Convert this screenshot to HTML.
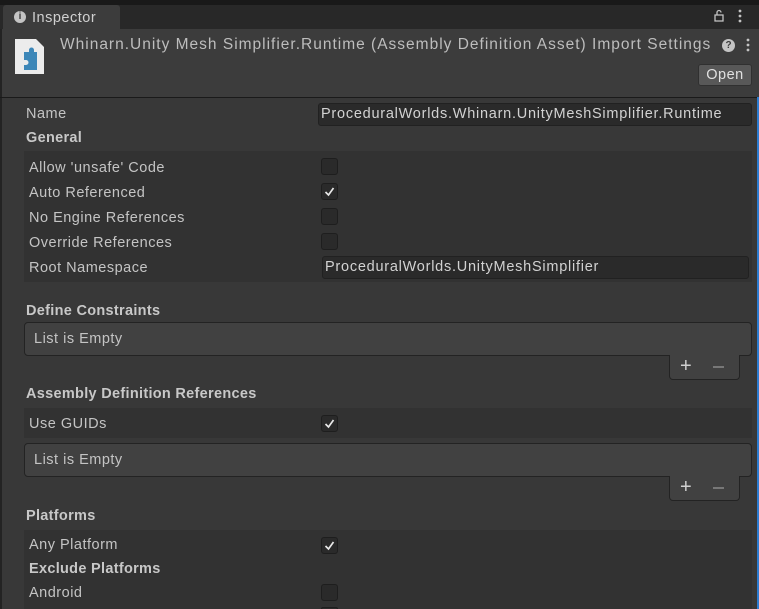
<!DOCTYPE html>
<html style="width:759px;height:609px;overflow:hidden"><head><style>
*{margin:0;padding:0;box-sizing:border-box}
body{width:759px;height:609px;overflow:hidden;background:#383838;font-family:"Liberation Sans",sans-serif;font-size:14.5px;letter-spacing:0.5px;color:#c4c4c4;position:relative}
.a{position:absolute}
.lbl{position:absolute;left:29px;line-height:20px;white-space:nowrap}
.b{font-weight:bold;color:#c8c8c8;letter-spacing:0.3px}
.cb{position:absolute;left:321px;width:17px;height:17px;background:#2a2a2a;border:1px solid #1e1e1e;border-radius:3px}
.cb svg{position:absolute;left:2px;top:2px}
.field{position:absolute;background:#2a2a2a;border:1px solid #212121;border-radius:3px;line-height:21px;padding-left:2px;color:#d2d2d2;white-space:nowrap;overflow:hidden;letter-spacing:0.75px}
.list{position:absolute;left:24px;width:728px;height:34px;background:#414141;border:1px solid #232323;border-radius:4px;padding-left:9px;line-height:32px}
.foot{position:absolute;left:669px;width:71px;height:25px;background:#414141;border:1px solid #232323;border-top:none;border-radius:0 0 4px 4px}
.grp{position:absolute;left:24px;width:728px;background:#323232}
</style></head><body>
<div class="a" style="left:0;top:0;width:759px;height:29px;background:#282828"></div>
<div class="a" style="left:0;top:0;width:759px;height:5px;background:#191919"></div>
<div class="a" style="left:3px;top:5px;width:117px;height:25px;background:#3c3c3c;border-radius:3px 3px 0 0"></div>
<div class="a" style="left:14px;top:11px;width:12px;height:12px;border-radius:50%;background:#c4c4c4;color:#3c3c3c;font-size:10px;font-weight:bold;text-align:center;line-height:12px;letter-spacing:0">i</div>
<div class="a" style="left:32px;top:9px;line-height:18px;font-size:14.5px;color:#d0d0d0">Inspector</div>
<svg class="a" style="left:713px;top:9px" width="12" height="13"><path d="M2 6h8v6H2z" fill="none" stroke="#c4c4c4" stroke-width="1.3"/><path d="M4 6V3.5a2 2 0 0 1 4 0" fill="none" stroke="#c4c4c4" stroke-width="1.3"/></svg>
<svg class="a" style="left:737px;top:9px" width="6" height="14"><circle cx="3" cy="2" r="1.4" fill="#c4c4c4"/><circle cx="3" cy="7" r="1.4" fill="#c4c4c4"/><circle cx="3" cy="12" r="1.4" fill="#c4c4c4"/></svg>
<div class="a" style="left:0;top:29px;width:759px;height:68px;background:#3c3c3c"></div>
<div class="a" style="left:0;top:29px;width:2px;height:580px;background:#232323"></div>
<svg class="a" style="left:14px;top:39px" width="31" height="36"><path d="M1 0H22L30 8V35H1z" fill="#ececec"/><path d="M10 13h5v-2a2.5 2.5 0 0 1 5 0v2h3v18H10v-5h2a2.5 2.5 0 0 0 0-5h-2z" fill="#3d87b8"/></svg>
<div class="a" style="left:60px;top:35px;line-height:20px;font-size:15.5px;letter-spacing:1px;color:#bdbdbd;white-space:nowrap">Whinarn.Unity Mesh Simplifier.Runtime (Assembly Definition Asset) Import Settings</div>
<div class="a" style="left:722px;top:39px;width:13px;height:13px;border-radius:50%;background:#c4c4c4;color:#3c3c3c;font-size:10px;font-weight:bold;text-align:center;line-height:13px;letter-spacing:0">?</div>
<svg class="a" style="left:745px;top:38px" width="6" height="14"><circle cx="3" cy="2" r="1.4" fill="#c4c4c4"/><circle cx="3" cy="7" r="1.4" fill="#c4c4c4"/><circle cx="3" cy="12" r="1.4" fill="#c4c4c4"/></svg>
<div class="a" style="left:698px;top:64px;width:54px;height:22px;background:#585858;border:1px solid #303030;border-radius:3px;text-align:center;line-height:20px;color:#e0e0e0">Open</div>
<div class="a" style="left:0;top:97px;width:759px;height:1px;background:#1a1a1a"></div>
<div class="a" style="left:757px;top:97px;width:2px;height:512px;background:#2d7cd0"></div>

<div class="lbl" style="left:26px;top:104px">Name</div>
<div class="field" style="left:318px;top:103px;width:434px;height:23px">ProceduralWorlds.Whinarn.UnityMeshSimplifier.Runtime</div>
<div class="lbl b" style="left:26px;top:128px">General</div>
<div class="grp" style="top:151px;height:131px"></div>
<div class="lbl" style="top:158px">Allow 'unsafe' Code</div>
<div class="cb" style="top:158px"></div>
<div class="lbl" style="top:183px">Auto Referenced</div>
<div class="cb" style="top:183px"><svg width="11" height="11"><path d="M1.5 6l3 3 5-7" fill="none" stroke="#e8e8e8" stroke-width="1.7"/></svg></div>
<div class="lbl" style="top:208px">No Engine References</div>
<div class="cb" style="top:208px"></div>
<div class="lbl" style="top:233px">Override References</div>
<div class="cb" style="top:233px"></div>
<div class="lbl" style="top:258px">Root Namespace</div>
<div class="field" style="left:322px;top:256px;width:427px;height:23px">ProceduralWorlds.UnityMeshSimplifier</div>

<div class="lbl b" style="left:26px;top:301px">Define Constraints</div>
<div class="list" style="top:322px">List is Empty</div>
<div class="foot" style="top:355px"></div>
<div class="a" style="left:680px;top:355px;line-height:22px;font-size:20px;color:#d0d0d0">+</div>
<div class="a" style="left:713px;top:366px;width:11px;height:2px;background:#777"></div>

<div class="lbl b" style="left:26px;top:384px">Assembly Definition References</div>
<div class="grp" style="top:408px;height:30px"></div>
<div class="lbl" style="top:414px">Use GUIDs</div>
<div class="cb" style="top:415px"><svg width="11" height="11"><path d="M1.5 6l3 3 5-7" fill="none" stroke="#e8e8e8" stroke-width="1.7"/></svg></div>
<div class="list" style="top:443px">List is Empty</div>
<div class="foot" style="top:476px"></div>
<div class="a" style="left:680px;top:476px;line-height:22px;font-size:20px;color:#d0d0d0">+</div>
<div class="a" style="left:713px;top:487px;width:11px;height:2px;background:#777"></div>

<div class="lbl b" style="left:26px;top:506px">Platforms</div>
<div class="grp" style="top:530px;height:79px"></div>
<div class="lbl" style="top:535px">Any Platform</div>
<div class="cb" style="top:537px"><svg width="11" height="11"><path d="M1.5 6l3 3 5-7" fill="none" stroke="#e8e8e8" stroke-width="1.7"/></svg></div>
<div class="lbl b" style="top:559px">Exclude Platforms</div>
<div class="lbl" style="top:583px">Android</div>
<div class="cb" style="top:584px"></div>
<div class="cb" style="top:607px;height:2px;border-bottom:none;border-radius:3px 3px 0 0"></div>
</body></html>
